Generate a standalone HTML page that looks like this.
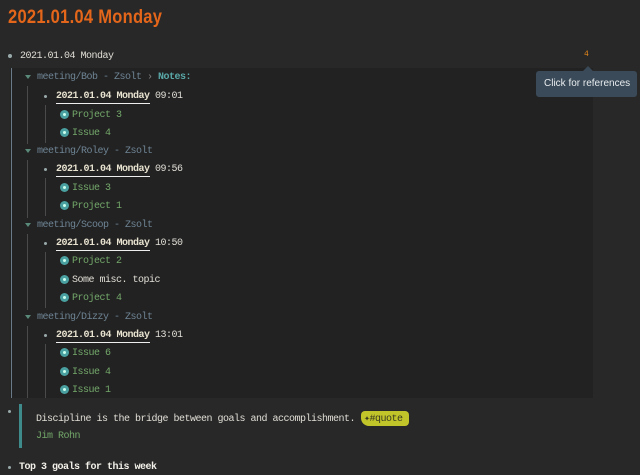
<!DOCTYPE html>
<html><head><meta charset="utf-8"><style>
*{margin:0;padding:0;box-sizing:border-box}
body{width:640px;height:475px;background:#282828;position:relative;overflow:hidden;font-family:"Liberation Mono",monospace;font-size:10px;letter-spacing:-0.5px;color:#e0ddd5}
.a{position:absolute;line-height:14px;white-space:nowrap;margin-top:1px}
.blk{position:absolute;left:10px;top:68px;width:583px;height:330px;background:#222}
.vl{position:absolute;width:1px;background:#4a4a4a}
.dot{position:absolute;width:4px;height:4px;border-radius:50%;background:#9aa}
.tri{position:absolute;width:0;height:0;border-left:3px solid transparent;border-right:3px solid transparent;border-top:4px solid #5a8a7a}
.m{color:#6e8494}
.d{color:#e8e2d0;font-weight:bold;border-bottom:1.5px solid #eee;padding-bottom:1px}
.g{color:#73a86a}
.c{position:absolute;width:9px;height:9px;border-radius:50%;background:#4aa0a0}
.c:after{content:"";position:absolute;left:3px;top:3px;width:3px;height:3px;background:#cfe;border-radius:50%}
</style></head><body>
<div class="a" style="left:8px;top:6px;font-family:'Liberation Sans',sans-serif;font-size:19px;line-height:22px;color:#e4661a;letter-spacing:0.3px;font-weight:bold;transform:scaleX(0.87);transform-origin:left">2021.01.04 Monday</div>
<div class="dot" style="left:8px;top:54px"></div>
<div class="a" style="left:20px;top:49px">2021.01.04 Monday</div>
<div class="a" style="left:584px;top:47px;color:#e4861a;font-size:8px">4</div>
<div class="blk"></div>
<div class="vl" style="left:11px;top:68px;height:330px;background:#6a7a88"></div>

<!-- Bob -->
<div class="tri" style="left:25px;top:75px"></div>
<div class="a m" style="left:37px;top:70px">meeting/Bob - Zsolt<span style="color:#888"> › </span><b style="color:#5aa8a8">Notes:</b></div>
<div class="vl" style="left:27px;top:86px;height:58px"></div>
<div class="dot" style="left:44px;top:95px;width:3px;height:3px"></div>
<div class="a" style="left:56px;top:89px"><span class="d">2021.01.04 Monday</span> 09:01</div>
<div class="vl" style="left:45px;top:105px;height:38px"></div>
<div class="c" style="left:60px;top:110px"></div><div class="a g" style="left:72px;top:108px">Project 3</div>
<div class="c" style="left:60px;top:128px"></div><div class="a g" style="left:72px;top:126px">Issue 4</div>

<!-- Roley -->
<div class="tri" style="left:25px;top:149px"></div>
<div class="a m" style="left:37px;top:144px">meeting/Roley - Zsolt</div>
<div class="vl" style="left:27px;top:160px;height:58px"></div>
<div class="dot" style="left:44px;top:168px;width:3px;height:3px"></div>
<div class="a" style="left:56px;top:162px"><span class="d">2021.01.04 Monday</span> 09:56</div>
<div class="vl" style="left:45px;top:178px;height:38px"></div>
<div class="c" style="left:60px;top:183px"></div><div class="a g" style="left:72px;top:181px">Issue 3</div>
<div class="c" style="left:60px;top:201px"></div><div class="a g" style="left:72px;top:199px">Project 1</div>

<!-- Scoop -->
<div class="tri" style="left:25px;top:223px"></div>
<div class="a m" style="left:37px;top:218px">meeting/Scoop - Zsolt</div>
<div class="vl" style="left:27px;top:234px;height:76px"></div>
<div class="dot" style="left:44px;top:242px;width:3px;height:3px"></div>
<div class="a" style="left:56px;top:236px"><span class="d">2021.01.04 Monday</span> 10:50</div>
<div class="vl" style="left:45px;top:252px;height:56px"></div>
<div class="c" style="left:60px;top:256px"></div><div class="a g" style="left:72px;top:254px">Project 2</div>
<div class="c" style="left:60px;top:275px"></div><div class="a" style="left:72px;top:273px">Some misc. topic</div>
<div class="c" style="left:60px;top:293px"></div><div class="a g" style="left:72px;top:291px">Project 4</div>

<!-- Dizzy -->
<div class="tri" style="left:25px;top:315px"></div>
<div class="a m" style="left:37px;top:310px">meeting/Dizzy - Zsolt</div>
<div class="vl" style="left:27px;top:326px;height:72px"></div>
<div class="dot" style="left:44px;top:334px;width:3px;height:3px"></div>
<div class="a" style="left:56px;top:328px"><span class="d">2021.01.04 Monday</span> 13:01</div>
<div class="vl" style="left:45px;top:344px;height:54px"></div>
<div class="c" style="left:60px;top:348px"></div><div class="a g" style="left:72px;top:346px">Issue 6</div>
<div class="c" style="left:60px;top:367px"></div><div class="a g" style="left:72px;top:365px">Issue 4</div>
<div class="c" style="left:60px;top:385px"></div><div class="a g" style="left:72px;top:383px">Issue 1</div>

<!-- tooltip -->
<div style="position:absolute;left:536px;top:71px;width:101px;height:26px;background:#3a4a58;border-radius:3px"></div>
<div style="position:absolute;left:583px;top:66px;width:0;height:0;border-left:5px solid transparent;border-right:5px solid transparent;border-bottom:5px solid #3a4a58"></div>
<div class="a" style="left:544px;top:76px;font-family:'Liberation Sans',sans-serif;font-size:10px;letter-spacing:0;color:#e8ecef">Click for references</div>

<!-- quote -->
<div class="dot" style="left:8px;top:410px;width:3px;height:3px"></div>
<div style="position:absolute;left:19px;top:404px;width:3px;height:44px;background:#3f8a8a"></div>
<div class="a" style="left:36px;top:412px">Discipline is the bridge between goals and accomplishment.</div>
<div style="position:absolute;left:361px;top:411px;width:48px;height:15px;background:#c2c52a;border-radius:4px 4px 4px 8px"></div>
<div class="a" style="left:364px;top:412px;color:#3a3a20">✦#quote</div>
<div class="a g" style="left:36px;top:429px">Jim Rohn</div>

<div class="dot" style="left:8px;top:466px;width:3px;height:3px"></div>
<div class="a" style="left:19px;top:460px;font-weight:bold;color:#f2f0e8">Top 3 goals for this week</div>
</body></html>
